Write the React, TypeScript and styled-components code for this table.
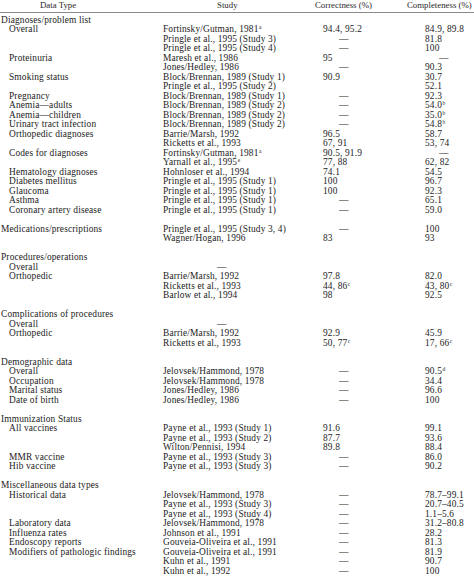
import React from "react";
import styled, { createGlobalStyle } from "styled-components";

const Global = createGlobalStyle`
  html, body { margin: 0; padding: 0; background: #ffffff; }
  body { font-family: "Liberation Serif", "Times New Roman", serif; color: #1c1c1c; }
`;

const Page = styled.div`
  width: 474px;
  height: 578px;
  overflow: hidden;
  font-size: 9.4px;
  letter-spacing: 0.15px;
`;

const HeaderRow = styled.div`
  display: grid;
  grid-template-columns: 177px 98px 92px 1fr;
  padding-left: 40px;
  height: 12px;
  line-height: 10px;
  border-bottom: 1px solid #8a8a8a;
  white-space: nowrap;
  font-size: 8.8px;
  letter-spacing: 0;
`;

const HeadCell = styled.div`
  color: #2a2a2a;
`;

const Body = styled.div`
  display: grid;
  grid-template-columns: 163px 160px 102px 1fr;
  grid-auto-rows: 9.5px;
  line-height: 9.5px;
  padding-top: 2.5px;
  white-space: nowrap;
`;

const TypeCell = styled.div<{ $indent: boolean }>`
  padding-left: ${(p) => (p.$indent ? "9px" : "1px")};
  overflow: visible;
`;

const Cell = styled.div<{ $dashPad?: number }>`
  padding-left: ${(p) => (p.$dashPad ? `${p.$dashPad}px` : "0")};
`;

const Sup = styled.sup`
  font-size: 5.5px;
  line-height: 0;
  vertical-align: 3px;
  margin-left: 0.5px;
`;

type Row = {
  type?: string;
  section?: boolean;
  study?: string;
  studySup?: string;
  corr?: string;
  corrSup?: string;
  comp?: string;
  compSup?: string;
  blank?: boolean;
};

const D = "—";

const rows: Row[] = [
  { type: "Diagnoses/problem list", section: true },
  { type: "Overall", study: "Fortinsky/Gutman, 1981", studySup: "a", corr: "94.4, 95.2", comp: "84.9, 89.8" },
  { study: "Pringle et al., 1995 (Study 3)", corr: D, comp: "81.8" },
  { study: "Pringle et al., 1995 (Study 4)", corr: D, comp: "100" },
  { type: "Proteinuria", study: "Maresh et al., 1986", corr: "95", comp: D },
  { study: "Jones/Hedley, 1986", corr: D, comp: "90.3" },
  { type: "Smoking status", study: "Block/Brennan, 1989 (Study 1)", corr: "90.9", comp: "30.7" },
  { study: "Pringle et al., 1995 (Study 2)", comp: "52.1" },
  { type: "Pregnancy", study: "Block/Brennan, 1989 (Study 1)", corr: D, comp: "92.3" },
  { type: "Anemia—adults", study: "Block/Brennan, 1989 (Study 2)", corr: D, comp: "54.0", compSup: "b" },
  { type: "Anemia—children", study: "Block/Brennan, 1989 (Study 2)", corr: D, comp: "35.0", compSup: "b" },
  { type: "Urinary tract infection", study: "Block/Brennan, 1989 (Study 2)", corr: D, comp: "54.8", compSup: "b" },
  { type: "Orthopedic diagnoses", study: "Barrie/Marsh, 1992", corr: "96.5", comp: "58.7" },
  { study: "Ricketts et al., 1993", corr: "67, 91", comp: "53, 74" },
  { type: "Codes for diagnoses", study: "Fortinsky/Gutman, 1981", studySup: "a", corr: "90.5, 91.9", comp: D },
  { study: "Yarnall et al., 1995", studySup: "e", corr: "77, 88", comp: "62, 82" },
  { type: "Hematology diagnoses", study: "Hohnloser et al., 1994", corr: "74.1", comp: "54.5" },
  { type: "Diabetes mellitus", study: "Pringle et al., 1995 (Study 1)", corr: "100", comp: "96.7" },
  { type: "Glaucoma", study: "Pringle et al., 1995 (Study 1)", corr: "100", comp: "92.3" },
  { type: "Asthma", study: "Pringle et al., 1995 (Study 1)", corr: D, comp: "65.1" },
  { type: "Coronary artery disease", study: "Pringle et al., 1995 (Study 1)", corr: D, comp: "59.0" },
  { blank: true },
  { type: "Medications/prescriptions", section: true, study: "Pringle et al., 1995 (Study 3, 4)", corr: D, comp: "100" },
  { study: "Wagner/Hogan, 1996", corr: "83", comp: "93" },
  { blank: true },
  { type: "Procedures/operations", section: true },
  { type: "Overall", study: D },
  { type: "Orthopedic", study: "Barrie/Marsh, 1992", corr: "97.8", comp: "82.0" },
  { study: "Ricketts et al., 1993", corr: "44, 86", corrSup: "c", comp: "43, 80", compSup: "c" },
  { study: "Barlow et al., 1994", corr: "98", comp: "92.5" },
  { blank: true },
  { type: "Complications of procedures", section: true },
  { type: "Overall", study: D },
  { type: "Orthopedic", study: "Barrie/Marsh, 1992", corr: "92.9", comp: "45.9" },
  { study: "Ricketts et al., 1993", corr: "50, 77", corrSup: "c", comp: "17, 66", compSup: "c" },
  { blank: true },
  { type: "Demographic data", section: true },
  { type: "Overall", study: "Jelovsek/Hammond, 1978", corr: D, comp: "90.5", compSup: "d" },
  { type: "Occupation", study: "Jelovsek/Hammond, 1978", corr: D, comp: "34.4" },
  { type: "Marital status", study: "Jones/Hedley, 1986", corr: D, comp: "96.6" },
  { type: "Date of birth", study: "Jones/Hedley, 1986", corr: D, comp: "100" },
  { blank: true },
  { type: "Immunization Status", section: true },
  { type: "All vaccines", study: "Payne et al., 1993 (Study 1)", corr: "91.6", comp: "99.1" },
  { study: "Payne et al., 1993 (Study 2)", corr: "87.7", comp: "93.6" },
  { study: "Wilton/Pennisi, 1994", corr: "89.8", comp: "88.4" },
  { type: "MMR vaccine", study: "Payne et al., 1993 (Study 3)", corr: D, comp: "86.0" },
  { type: "Hib vaccine", study: "Payne et al., 1993 (Study 3)", corr: D, comp: "90.2" },
  { blank: true },
  { type: "Miscellaneous data types", section: true },
  { type: "Historical data", study: "Jelovsek/Hammond, 1978", corr: D, comp: "78.7–99.1" },
  { study: "Payne et al., 1993 (Study 3)", corr: D, comp: "20.7–40.5" },
  { study: "Payne et al., 1993 (Study 4)", corr: D, comp: "1.1–5.6" },
  { type: "Laboratory data", study: "Jelovsek/Hammond, 1978", corr: D, comp: "31.2–80.8" },
  { type: "Influenza rates", study: "Johnson et al., 1991", corr: D, comp: "28.2" },
  { type: "Endoscopy reports", study: "Gouveia-Oliveira et al., 1991", corr: D, comp: "81.3" },
  { type: "Modifiers of pathologic findings", study: "Gouveia-Oliveira et al., 1991", corr: D, comp: "81.9" },
  { study: "Kuhn et al., 1991", corr: D, comp: "90.7" },
  { study: "Kuhn et al., 1992", corr: D, comp: "100" },
];

const Val: React.FC<{ v?: string; sup?: string; pad: number }> = ({ v, sup, pad }) => (
  <Cell $dashPad={v === D ? pad : 0}>
    {v}
    {sup && <Sup>{sup}</Sup>}
  </Cell>
);

export default function App() {
  return (
    <Page>
      <Global />
      <HeaderRow>
        <HeadCell>Data Type</HeadCell>
        <HeadCell>Study</HeadCell>
        <HeadCell>Correctness (%)</HeadCell>
        <HeadCell>Completeness (%)</HeadCell>
      </HeaderRow>
      <Body>
        {rows.map((r, i) =>
          r.blank ? (
            <React.Fragment key={i}>
              <TypeCell $indent={false} />
              <Cell />
              <Cell />
              <Cell />
            </React.Fragment>
          ) : (
            <React.Fragment key={i}>
              <TypeCell $indent={!r.section}>{r.type}</TypeCell>
              <Val v={r.study} sup={r.studySup} pad={54} />
              <Val v={r.corr} sup={r.corrSup} pad={16} />
              <Val v={r.comp} sup={r.compSup} pad={14} />
            </React.Fragment>
          )
        )}
      </Body>
    </Page>
  );
}
